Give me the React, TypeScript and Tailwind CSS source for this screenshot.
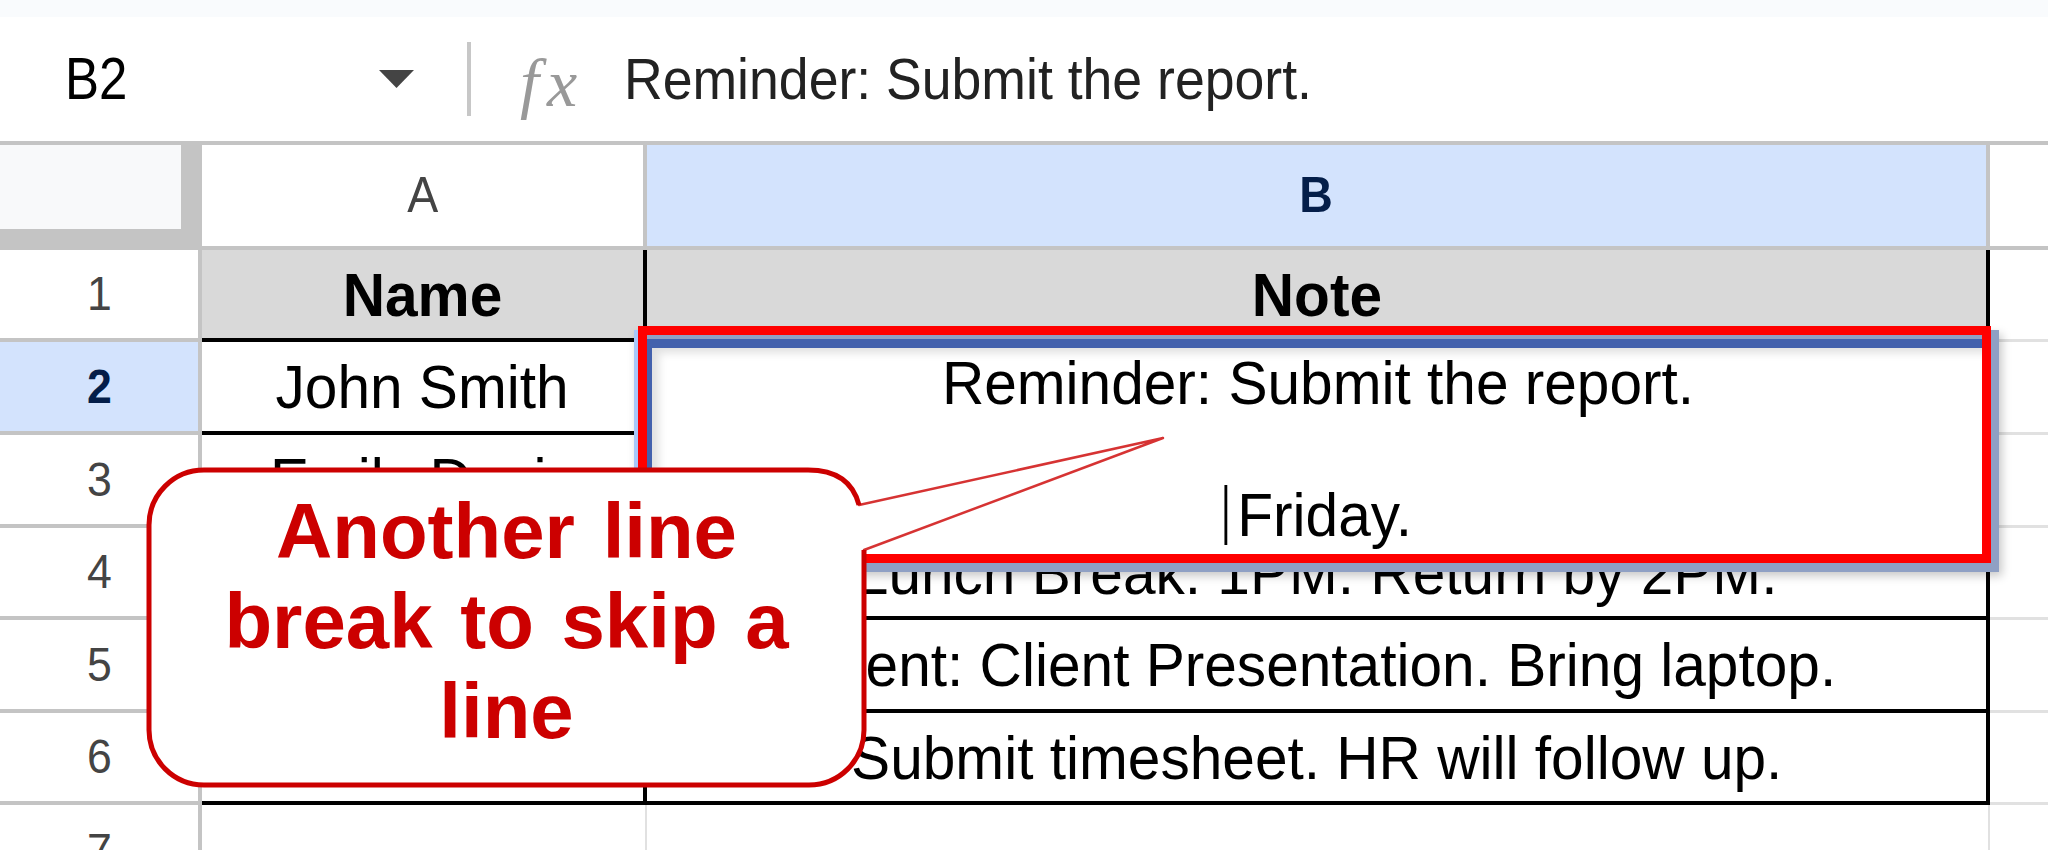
import React from 'react';

interface SheetRow {
  num: number;
  name: string;
  note: string;
  height: string;
}

// rows 1-6 of the sheet, heights follow the grid lines
const rows: SheetRow[] = [
  { num: 1, name: 'Name', note: 'Note', height: 'h-[92px]' },
  { num: 2, name: 'John Smith', note: 'Reminder: Submit the report. Due Friday.', height: 'h-[93px]' },
  { num: 3, name: 'Emily Davis', note: 'Meeting at 10AM. Bring notes.', height: 'h-[93px]' },
  { num: 4, name: 'Michael Lee', note: 'Lunch Break: 1PM. Return by 2PM.', height: 'h-[92px]' },
  { num: 5, name: 'Sarah Johnson', note: 'Event: Client Presentation. Bring laptop.', height: 'h-[93px]' },
  { num: 6, name: 'David Wilson', note: 'Submit timesheet. HR will follow up.', height: 'h-[92px]' },
];

const FormulaBar = () => (
  <div className="flex h-[124px] items-center bg-white">
    <div className="w-[379px] shrink-0 pl-[65px] text-[60px] leading-none text-black">
      <span className="inline-block origin-left scale-x-[0.85]">B2</span>
    </div>
    <svg width="35" height="18" viewBox="0 0 35 18" className="shrink-0">
      <path d="M0 0 H35 L17.5 18 Z" fill="#444" />
    </svg>
    <div className="ml-[53px] h-[74px] w-[4px] shrink-0 bg-[#c7c7c7]" />
    <div className="ml-[49px] w-[104px] shrink-0 pt-[8px] font-['Liberation_Serif',serif] text-[68px] italic leading-none tracking-[8px] text-[#999]">
      fx
    </div>
    <div className="text-[57px] leading-none text-[#222]">
      <span className="inline-block origin-left scale-x-[0.94] whitespace-nowrap">Reminder: Submit the report.</span>
    </div>
  </div>
);

const ColumnHeaders = () => (
  <div className="flex h-[105px]">
    <div className="w-[202px] shrink-0 bg-[#c4c4c4]">
      <div className="h-[84px] w-[181px] bg-[#f8f9fa]" />
    </div>
    <div className="flex w-[445px] shrink-0 items-center justify-center border-r-4 border-b-4 border-[#c4c4c4] bg-white text-[50px] text-[#444]">
      <span className="scale-x-[0.93]">A</span>
    </div>
    <div className="flex w-[1343px] shrink-0 items-center justify-center border-r-4 border-b-4 border-[#c4c4c4] bg-[#d3e3fd] text-[50px] font-bold text-[#041e49]">
      <span className="scale-x-[0.93]">B</span>
    </div>
    <div className="flex-1 border-b-4 border-[#c4c4c4] bg-white" />
  </div>
);

const DataRow = ({ row }: { row: SheetRow }) => {
  const isHead = row.num === 1;
  const isActive = row.num === 2;
  const fill = isHead ? 'bg-[#d9d9d9] font-bold' : 'bg-white';
  return (
    <div className={`flex ${row.height}`}>
      <div
        className={`flex w-[202px] shrink-0 items-center justify-center border-r-4 border-b-4 border-[#c4c4c4] text-[48px] ${
          isActive ? 'bg-[#d3e3fd] font-bold text-[#041e49]' : 'bg-white text-[#444]'
        }`}
      >
        <span className="scale-x-[0.93]">{row.num}</span>
      </div>
      <div className={`flex w-[445px] shrink-0 items-center justify-center border-r-4 border-b-4 border-black text-[62px] text-black ${fill}`}>
        <span className="scale-x-[0.945] whitespace-nowrap">{row.name}</span>
      </div>
      <div className={`flex w-[1343px] shrink-0 items-center justify-center border-r-4 border-b-4 border-black text-[62px] text-black ${fill}`}>
        <span className="scale-x-[0.945] whitespace-nowrap">{row.note}</span>
      </div>
      <div className="flex-1 border-b-[3px] border-[#e1e1e1] bg-white" />
    </div>
  );
};

const EmptyRow = () => (
  <div className="flex h-[92px]">
    <div className="flex w-[202px] shrink-0 items-center justify-center border-r-4 border-[#c4c4c4] text-[48px] text-[#444]">
      <span className="scale-x-[0.93]">7</span>
    </div>
    <div className="w-[445px] shrink-0 border-r-2 border-[#e1e1e1]" />
    <div className="w-[1343px] shrink-0 border-r-2 border-[#e1e1e1]" />
    <div className="flex-1" />
  </div>
);

// open cell editor on B2, with the red highlight drawn round it
const CellEditor = () => (
  <>
    <div className="absolute left-[634px] top-[330px] h-[242px] w-[1365px] border-l-4 border-[#a8c7fa] bg-[#8fa0c4] pt-[9px] pr-[8px] pb-[9px] pl-[9px] shadow-[3px_4px_9px_rgba(0,0,0,0.22)]">
      <div className="h-full border-t-[9px] border-l-[5px] border-[#4361ad] bg-white pt-[2px] pr-[7px] shadow-[inset_7px_5px_9px_rgba(0,0,0,0.12)]">
        <div className="text-[62px] leading-[66px] text-black">
          <div className="scale-x-[0.945] text-center whitespace-nowrap">Reminder: Submit the report.</div>
          <div className="h-[66px]" />
          <div className="flex h-[66px] scale-x-[0.945] items-center justify-center">
            <span className="mr-[11px] h-[60px] w-[3px] bg-black" />
            <span>Friday.</span>
          </div>
        </div>
      </div>
    </div>
    <div className="absolute left-[638px] top-[326px] h-[237px] w-[1353px] border-[9px] border-[#ff0000]" />
  </>
);

const Callout = () => (
  <>
    <svg className="pointer-events-none absolute left-0 top-0" width="2048" height="850" viewBox="0 0 2048 850">
      <path
        d="M204 470 H808 Q850 470 859 505 L1163 438 L864 550 V730 A55 55 0 0 1 809 785 H204 A55 55 0 0 1 149 730 V525 A55 55 0 0 1 204 470 Z"
        fill="#fff"
        stroke="#cc0000"
        strokeOpacity="0.8"
        strokeWidth="2.5"
        strokeLinejoin="round"
      />
      <path
        d="M864 550 V730 A55 55 0 0 1 809 785 H204 A55 55 0 0 1 149 730 V525 A55 55 0 0 1 204 470 H808 Q850 470 859 505"
        fill="none"
        stroke="#cc0000"
        strokeWidth="5"
      />
    </svg>
    <div className="absolute left-[149px] top-[486px] w-[715px] text-center text-[78px] leading-[90px] font-bold text-[#cc0000] [word-spacing:6px]">
      Another line
      <br />
      break to skip a
      <br />
      line
    </div>
  </>
);

export default function App() {
  return (
    <div className="relative h-[850px] w-[2048px] overflow-hidden bg-white font-['Liberation_Sans',Arial,sans-serif]">
      <div className="h-[17px] bg-[#f9fbfd]" />
      <FormulaBar />
      <div className="h-[4px] bg-[#c4c4c4]" />
      <ColumnHeaders />
      {rows.map((r) => (
        <DataRow key={r.num} row={r} />
      ))}
      <EmptyRow />

      <CellEditor />
      <Callout />
    </div>
  );
}
